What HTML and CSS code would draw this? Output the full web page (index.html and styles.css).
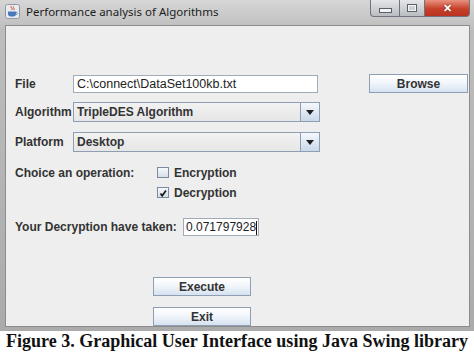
FILE: index.html
```html
<!DOCTYPE html>
<html lang="en">
<head>
  <meta charset="UTF-8">
  <title>Performance analysis of Algorithms</title>
  <link rel="stylesheet" href="styles.css">
</head>
<body>

  <div class="window">
    <div class="titlebar">
      <span class="app-icon">
        <svg width="15" height="15" viewBox="0 0 15 15">
          <rect x="0.5" y="0.5" width="14" height="14" rx="2" fill="#e8ecf0" stroke="#8e98a4"/>
          <path d="M6 2 C5 3.5 8 4 7 6 M8.5 2.5 C7.5 4 10 4.5 9 6" stroke="#d0502a" stroke-width="1" fill="none"/>
          <path d="M3 7.5 H11 V10 C11 12 9.5 12.5 7 12.5 C4.5 12.5 3 12 3 10 Z" fill="#4a78b8"/>
          <path d="M11 8.3 C13 8.3 13 10.5 11 10.5" stroke="#4a78b8" stroke-width="1" fill="none"/>
        </svg>
      </span>
      <span class="title">Performance analysis of Algorithms</span>
      <div class="controls">
        <span class="ctl min"><i></i></span>
        <span class="ctl max"><i></i></span>
        <span class="ctl close">&#x2715;</span>
      </div>
    </div>

    <div class="frame">
      <div class="panel">

        <div class="row row-file">
          <label class="lbl lbl-field">File</label>
          <div class="field field-file">C:\connect\DataSet100kb.txt</div>
          <button class="btn btn-browse">Browse</button>
        </div>

        <div class="row row-algo">
          <label class="lbl lbl-field">Algorithm</label>
          <div class="combo">
            <span class="combo-text">TripleDES Algorithm</span>
            <span class="combo-arrow"></span>
          </div>
        </div>

        <div class="row row-plat">
          <label class="lbl lbl-field">Platform</label>
          <div class="combo">
            <span class="combo-text">Desktop</span>
            <span class="combo-arrow"></span>
          </div>
        </div>

        <div class="ops">
          <div class="op-line">
            <label class="lbl lbl-ops">Choice an operation:</label>
            <span class="check"></span>
            <span class="lbl">Encryption</span>
          </div>
          <div class="op-line">
            <span class="lbl lbl-ops"></span>
            <span class="check checked">
              <svg width="10" height="10" viewBox="0 0 10 10">
                <path d="M2.5 5.5 L4.2 7.8 L8 2.5" stroke="#1a1a1a" stroke-width="1.7" fill="none"/>
              </svg>
            </span>
            <span class="lbl">Decryption</span>
          </div>
        </div>

        <div class="row row-time">
          <label class="lbl lbl-time">Your Decryption have taken:</label>
          <div class="field field-time">0.071797928<span class="caret"></span></div>
        </div>

        <button class="btn btn-action btn-exec">Execute</button>
        <button class="btn btn-action btn-exit">Exit</button>

      </div>
    </div>
  </div>

  <div class="caption">Figure 3. Graphical User Interface using Java Swing library</div>

</body>
</html>
```

FILE: styles.css
```css
body {
  margin: 0;
  width: 474px;
  height: 353px;
  overflow: hidden;
  background-color: #fff;
  font-family: "Liberation Sans", Arial, sans-serif;
}

.window {
  height: 331px;
  display: flex;
  flex-direction: column;
  background: linear-gradient(#d6d6d6, #bdbdbd 30px, #ababab);
}

/* title bar */

.titlebar {
  height: 26px;
  display: flex;
  align-items: flex-start;
  position: relative;
}

.app-icon {
  margin: 4px 0 0 5px;
  width: 15px;
  height: 15px;
}

.title {
  margin: 4px 0 0 6px;
  font-family: "Noto Sans", "Open Sans", sans-serif;
  font-size: 11.5px;
  color: #1c1c1c;
}

.controls {
  position: absolute;
  top: 0;
  right: 4px;
  display: flex;
}

.ctl {
  height: 17px;
  display: flex;
  align-items: center;
  justify-content: center;
  border: 1px solid #6f747c;
  border-top: none;
  box-sizing: border-box;
  background: linear-gradient(#e4e6e8, #b9bcc1);
}

.ctl.min {
  width: 29px;
  border-radius: 0 0 0 4px;
  border-right: none;
}

.ctl.min i {
  width: 11px;
  height: 3px;
  margin-top: 5px;
  background-color: #f4f4f4;
  border: 1px solid #5b6068;
}

.ctl.max {
  width: 26px;
}

.ctl.max i {
  width: 8px;
  height: 6px;
  border: 1px solid #5b6068;
  box-shadow: inset 0 0 0 1px #f4f4f4;
}

.ctl.close {
  width: 45px;
  border-radius: 0 0 4px 0;
  border-left: none;
  background: linear-gradient(#e9927f, #c8402a 55%, #b83320);
  color: #fff;
  font-size: 11px;
  font-weight: bold;
  text-shadow: 0 0 2px #6a1a10;
}

/* frame + panel */

.frame {
  flex: 1;
  padding: 0 4px 4px 5px;
  display: flex;
}

.panel {
  flex: 1;
  background-color: #eeeeee;
  border: 1px solid #8c8c8c;
  padding: 48px 0 0 9px;
  display: flex;
  flex-direction: column;
  align-items: flex-start;
}

.row {
  display: flex;
  align-items: center;
}

.lbl {
  font-size: 12px;
  font-weight: bold;
  color: #333;
  white-space: nowrap;
}

.lbl-field {
  width: 58px;
}

.lbl-ops {
  width: 142px;
}

.lbl-time {
  width: 168px;
}

.field {
  height: 18px;
  box-sizing: border-box;
  background-color: #fff;
  border: 1px solid #a0acb8;
  padding: 1px 0 0 3px;
  font-size: 12.5px;
  color: #222;
  line-height: 15px;
  white-space: nowrap;
}

.row-file {
  height: 19px;
}

.field-file {
  width: 245px;
}

.btn {
  font-family: "Liberation Sans", Arial, sans-serif;
  font-size: 12px;
  font-weight: bold;
  color: #333;
  background: linear-gradient(#ffffff, #f2f6fb 45%, #d6e2f0);
  border: 1px solid #8e9fb4;
  padding: 0;
  height: 19px;
  box-sizing: border-box;
}

.btn-browse {
  width: 99px;
  margin-left: 51px;
}

.row-algo {
  margin-top: 9px;
}

.row-plat {
  margin-top: 10px;
}

.combo {
  width: 247px;
  height: 20px;
  box-sizing: border-box;
  border: 1px solid #8e9fb4;
  background: linear-gradient(#f2f2f2, #e6e6e6);
  display: flex;
  align-items: center;
}

.combo-text {
  flex: 1;
  padding-left: 3px;
  font-size: 12px;
  font-weight: bold;
  color: #333;
}

.combo-arrow {
  width: 18px;
  align-self: stretch;
  border-left: 1px solid #8e9fb4;
  background: linear-gradient(#f6f9fc, #c9d8ea);
  display: flex;
  align-items: center;
  justify-content: center;
}

.combo-arrow::after {
  content: "";
  border-left: 4px solid transparent;
  border-right: 4px solid transparent;
  border-top: 5px solid #222;
}

/* operation checkboxes */

.ops {
  margin-top: 13px;
  display: flex;
  flex-direction: column;
  gap: 5px;
}

.op-line {
  height: 15px;
  display: flex;
  align-items: center;
}

.check {
  width: 12px;
  height: 11px;
  box-sizing: border-box;
  border: 1px solid #7b8a9c;
  background: linear-gradient(#f6f8fb, #d6dee8);
  margin-right: 5px;
  display: flex;
  align-items: center;
  justify-content: center;
}

.row-time {
  margin-top: 18px;
}

.field-time {
  width: 76px;
  font-size: 12px;
  padding-left: 2px;
  display: flex;
  align-items: center;
}

.caret {
  width: 1px;
  height: 14px;
  background-color: #111;
}

.btn-action {
  width: 98px;
  margin-left: 138px;
}

.btn-exec {
  margin-top: 41px;
}

.btn-exit {
  margin-top: 11px;
}

.caption {
  text-align: center;
  font-family: "Liberation Serif", "Times New Roman", serif;
  font-weight: bold;
  font-size: 18px;
  line-height: 21px;
  color: #111;
}
```
